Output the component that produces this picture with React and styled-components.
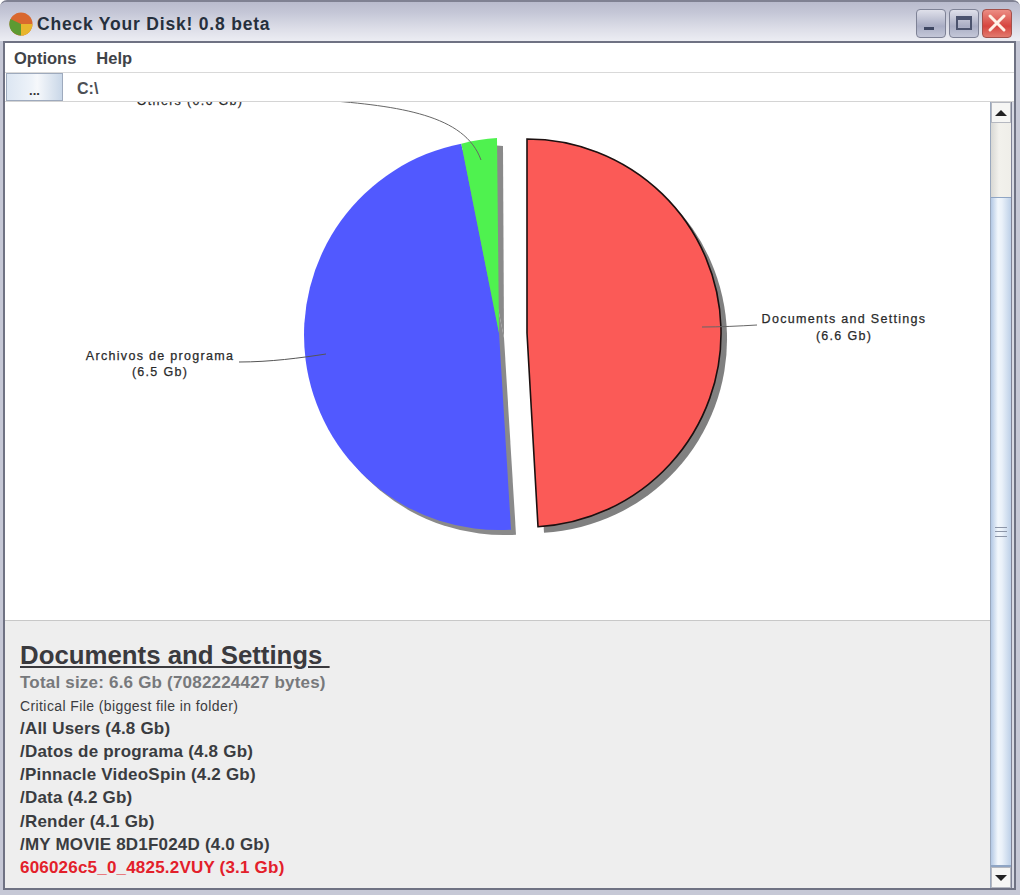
import React from "react";
import styled, { createGlobalStyle } from "styled-components";

const folders = [
  { name: "/All Users", size: "4.8 Gb" },
  { name: "/Datos de programa", size: "4.8 Gb" },
  { name: "/Pinnacle VideoSpin", size: "4.2 Gb" },
  { name: "/Data", size: "4.2 Gb" },
  { name: "/Render", size: "4.1 Gb" },
  { name: "/MY MOVIE 8D1F024D", size: "4.0 Gb" },
  { name: "606026c5_0_4825.2VUY", size: "3.1 Gb", critical: true },
];

const PieChart = () => (
  <ChartSvg viewBox="0 0 985 518">
    <g transform="translate(-5 -102)">
      <path d="M 466.3 148.68 A 195 195 0 0 0 516 534.63 L 504 338 Z" fill="#8a8a8a" />
      <path d="M 466 148 Q 484 144 503 146 L 504 338 Z" fill="#8a8a8a" />
      <path d="M 533 145 A 194 194 0 0 1 544 532.69 L 533 339 Z" fill="#808080" />
      <path d="M 461.3 143.68 A 195 195 0 0 0 511 529.63 L 499 333 Z" fill="#5159ff" />
      <path d="M 461.3 143.68 Q 479 139 497 138 L 499 333 Z" fill="#4ff24f" />
      <path
        d="M 527 139 A 194 194 0 0 1 538 526.69 L 527 333 Z"
        fill="#fb5a57"
        stroke="#1c1010"
        strokeWidth="1.6"
      />
      <path d="M 322 100 C 400 106 465 115 481 160" fill="none" stroke="#666" strokeWidth="1" />
      <path d="M 239 362 C 270 362 300 358 326 354" fill="none" stroke="#555" strokeWidth="1" />
      <path d="M 702 327 C 720 327 740 326 757 325" fill="none" stroke="#666" strokeWidth="1" />
      <ChartLabel x="190" y="105">Others (0.6 Gb)</ChartLabel>
      <ChartLabel x="160" y="360">Archivos de programa</ChartLabel>
      <ChartLabel x="160" y="376">(6.5 Gb)</ChartLabel>
      <ChartLabel x="844" y="323">Documents and Settings</ChartLabel>
      <ChartLabel x="844" y="340">(6.6 Gb)</ChartLabel>
    </g>
  </ChartSvg>
);

const App = () => (
  <>
    <GlobalStyle />
    <Window>
      <TitleBar>
        <AppIcon viewBox="0 0 24 24">
          <circle cx="12" cy="12" r="11.5" fill="#d9682e" />
          <path d="M12 12 L12 23.5 A11.5 11.5 0 0 1 1.5 7 Z" fill="#5d9a32" />
          <path d="M12 12 L23.5 12 A11.5 11.5 0 0 1 12 23.5 Z" fill="#e8b52c" />
        </AppIcon>
        <Title>Check Your Disk! 0.8 beta</Title>
        <WindowButtons>
          <WindowButton>
            <MinimizeMark />
          </WindowButton>
          <WindowButton>
            <MaximizeMark />
          </WindowButton>
          <CloseButton>
            <svg width="22" height="20" viewBox="0 0 22 20">
              <path d="M4 3 L18 17 M18 3 L4 17" stroke="#fff3e8" strokeWidth="3" strokeLinecap="round" />
            </svg>
          </CloseButton>
        </WindowButtons>
      </TitleBar>
      <Client>
        <MenuBar>
          <MenuItem>Options</MenuItem>
          <MenuItem>Help</MenuItem>
        </MenuBar>
        <PathBar>
          <BrowseButton>...</BrowseButton>
          <PathText>C:\</PathText>
        </PathBar>
        <Body>
          <Content>
            <ChartPane>
              <PieChart />
            </ChartPane>
            <Details>
              <Heading>Documents and Settings&nbsp;</Heading>
              <TotalSize>Total size: 6.6 Gb (7082224427 bytes)</TotalSize>
              <CriticalNote>Critical File (biggest file in folder)</CriticalNote>
              {folders.map((f) => (
                <FolderRow key={f.name} $critical={f.critical}>
                  {f.name} ({f.size})
                </FolderRow>
              ))}
            </Details>
          </Content>
          <ScrollBar>
            <ScrollButton>
              <ArrowUp />
            </ScrollButton>
            <ScrollTrack />
            <ScrollThumb>
              <Grip />
            </ScrollThumb>
            <ScrollButton>
              <ArrowDown />
            </ScrollButton>
          </ScrollBar>
        </Body>
      </Client>
    </Window>
  </>
);

const GlobalStyle = createGlobalStyle`
  html, body {
    margin: 0;
    padding: 0;
    background: #fff;
  }
  #root {
    width: 1020px;
    height: 895px;
    overflow: hidden;
  }
`;

const Window = styled.div`
  width: 1020px;
  height: 895px;
  box-sizing: border-box;
  display: flex;
  flex-direction: column;
  border-top: 2px solid #7f8192;
  border-radius: 7px 7px 0 0;
  overflow: hidden;
  background: #c6c8d6;
  font-family: "Liberation Sans", Arial, sans-serif;
`;

const TitleBar = styled.div`
  height: 39px;
  flex: none;
  display: flex;
  align-items: center;
  padding: 0 8px 0 9px;
  background: linear-gradient(#b9bbcd 0, #c4c6d6 10px, #dcdde7 26px, #ecedf3 39px);
`;

const AppIcon = styled.svg`
  width: 24px;
  height: 24px;
  flex: none;
  margin-top: 4px;
`;

const Title = styled.div`
  margin: 5px 0 0 4px;
  font-size: 17.5px;
  font-weight: 700;
  letter-spacing: 0.8px;
  color: #26303d;
`;

const WindowButtons = styled.div`
  margin-left: auto;
  margin-top: 3px;
  display: flex;
  gap: 3px;
`;

const WindowButton = styled.div`
  width: 30px;
  height: 29px;
  box-sizing: border-box;
  display: flex;
  align-items: center;
  justify-content: center;
  border: 1px solid #7e8296;
  border-radius: 4px;
  background: linear-gradient(#dfe0ea, #a9adc4 60%, #c4c7d8);
  position: relative;
`;

const CloseButton = styled(WindowButton)`
  border-color: #a3504a;
  background: linear-gradient(#ec8d83, #d6453f 60%, #e27a6e);
`;

const MinimizeMark = styled.div`
  width: 10px;
  height: 3px;
  margin-top: 10px;
  margin-right: 4px;
  background: #3e4762;
`;

const MaximizeMark = styled.div`
  width: 16px;
  height: 14px;
  box-sizing: border-box;
  border: 2px solid #4b536e;
  border-top-width: 4px;
`;

const Client = styled.div`
  flex: 1;
  min-height: 0;
  display: flex;
  flex-direction: column;
  margin: 0 4px 5px 3px;
  border: 2px solid #6f7283;
  background: #fff;
`;

const MenuBar = styled.div`
  height: 30px;
  flex: none;
  box-sizing: border-box;
  display: flex;
  align-items: center;
  gap: 20px;
  padding: 2px 0 0 9px;
  border-bottom: 1px solid #d9d9d9;
`;

const MenuItem = styled.div`
  font-size: 16.5px;
  font-weight: 700;
  color: #3f4348;
`;

const PathBar = styled.div`
  height: 29px;
  flex: none;
  box-sizing: border-box;
  display: flex;
  align-items: center;
  border-bottom: 1px solid #d4d4d4;
`;

const BrowseButton = styled.div`
  width: 57px;
  height: 28px;
  box-sizing: border-box;
  display: flex;
  align-items: flex-end;
  justify-content: center;
  padding-bottom: 3px;
  margin-left: 1px;
  border: 1px solid #9eaabd;
  background: linear-gradient(90deg, #dce6f2, #eef3f9 45%, #f6f8fb 55%, #c9d7e8);
  font-size: 13px;
  font-weight: 700;
  line-height: 13px;
  color: #333;
`;

const PathText = styled.div`
  margin: 3px 0 0 14px;
  font-size: 16px;
  font-weight: 700;
  color: #4c4f55;
`;

const Body = styled.div`
  flex: 1;
  min-height: 0;
  display: flex;
  padding-right: 2px;
  background: #d8dae4;
`;

const Content = styled.div`
  flex: 1;
  min-width: 0;
  display: flex;
  flex-direction: column;
`;

const ChartPane = styled.div`
  height: 518px;
  flex: none;
  overflow: hidden;
  background: #fff;
`;

const ChartSvg = styled.svg`
  display: block;
  width: 985px;
  height: 518px;
`;

const ChartLabel = styled.text`
  font-family: "Liberation Sans", Arial, sans-serif;
  font-size: 12.5px;
  font-weight: 400;
  letter-spacing: 1.3px;
  fill: #2a2a2a;
  stroke: #2a2a2a;
  stroke-width: 0.25px;
  text-anchor: middle;
`;

const Details = styled.div`
  flex: 1;
  min-height: 0;
  box-sizing: border-box;
  padding: 19px 0 0 15px;
  background: #eeeeee;
  border-top: 1px solid #c8c8c8;
`;

const Heading = styled.div`
  font-size: 25.8px;
  line-height: 30px;
  font-weight: 700;
  text-decoration: underline;
  color: #3a3a3e;
`;

const TotalSize = styled.div`
  margin-top: 2px;
  font-size: 17px;
  line-height: 22px;
  letter-spacing: 0.2px;
  font-weight: 700;
  color: #77797c;
`;

const CriticalNote = styled.div`
  margin: 3px 0 1px;
  font-size: 14px;
  line-height: 19px;
  letter-spacing: 0.4px;
  color: #3c3c40;
`;

const FolderRow = styled.div`
  font-size: 17px;
  line-height: 23.15px;
  letter-spacing: 0.2px;
  font-weight: 700;
  color: ${(p) => (p.$critical ? "#e3202a" : "#3a3c40")};
`;

const ScrollBar = styled.div`
  width: 22px;
  flex: none;
  display: flex;
  flex-direction: column;
  border-left: 1px solid #9aa8bd;
  border-right: 1px solid #7f8296;
  box-sizing: border-box;
  background: #f2f1ec;
`;

const ScrollButton = styled.div`
  height: 21px;
  flex: none;
  display: flex;
  align-items: center;
  justify-content: center;
  background: #f6f6f4;
  border: 1px solid #b5b8c0;
  box-sizing: border-box;
`;

const ArrowUp = styled.div`
  border-left: 6px solid transparent;
  border-right: 6px solid transparent;
  border-bottom: 6px solid #222;
`;

const ArrowDown = styled.div`
  border-left: 6px solid transparent;
  border-right: 6px solid transparent;
  border-top: 6px solid #222;
`;

const ScrollTrack = styled.div`
  height: 74px;
  flex: none;
  background: linear-gradient(90deg, #d8d8d4, #f2f1ec 40%, #efeee9);
`;

const ScrollThumb = styled.div`
  flex: 1;
  min-height: 0;
  display: flex;
  align-items: center;
  justify-content: center;
  box-sizing: border-box;
  border: 1px solid #8fa5c4;
  border-width: 1px 0 2px 0;
  background: linear-gradient(90deg, #b3c8e4, #f2f7fc 35%, #eaf1f9 55%, #bdd0e8);
`;

const Grip = styled.div`
  width: 12px;
  height: 8px;
  border-top: 1px solid #8d96a8;
  border-bottom: 1px solid #8d96a8;
  position: relative;
  &::after {
    content: "";
    position: absolute;
    left: 0;
    right: 0;
    top: 3px;
    height: 1px;
    background: #8d96a8;
  }
`;

export default App;
